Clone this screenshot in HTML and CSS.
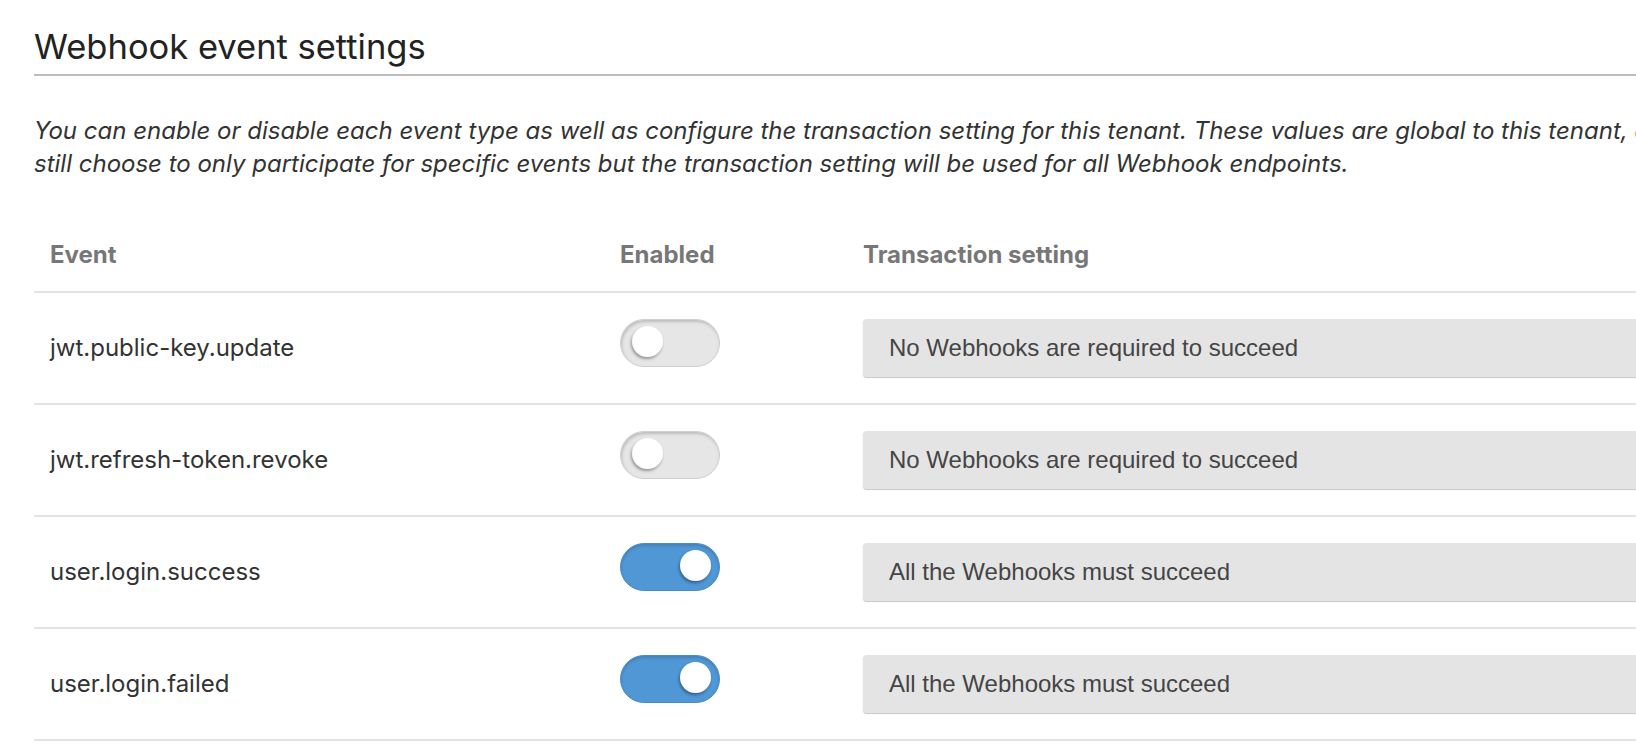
FILE: index.html
```html
<!DOCTYPE html>
<html lang="en">
<head>
<meta charset="utf-8">
<title>Webhook event settings</title>
<link rel="stylesheet" href="styles.css">
</head>
<body>
<div class="page">
  <h2 class="title">Webhook event settings</h2>
  <p class="intro">You can enable or disable each event type as well as configure the transaction setting for this tenant. These values are global to this tenant, and each Webhook can still choose to only participate for specific events but the transaction setting will be used for all Webhook endpoints.</p>
  <div class="table">
    <div class="row head">
      <div class="cell c-event">Event</div>
      <div class="cell c-enabled">Enabled</div>
      <div class="cell c-tx">Transaction setting</div>
    </div>
    <div class="row">
      <div class="cell c-event"><span class="event-name">jwt.public-key.update</span></div>
      <div class="cell c-enabled"><span class="toggle"><span class="knob"></span></span></div>
      <div class="cell c-tx"><div class="select">No Webhooks are required to succeed</div></div>
    </div>
    <div class="row">
      <div class="cell c-event"><span class="event-name">jwt.refresh-token.revoke</span></div>
      <div class="cell c-enabled"><span class="toggle"><span class="knob"></span></span></div>
      <div class="cell c-tx"><div class="select">No Webhooks are required to succeed</div></div>
    </div>
    <div class="row">
      <div class="cell c-event"><span class="event-name">user.login.success</span></div>
      <div class="cell c-enabled"><span class="toggle on"><span class="knob"></span></span></div>
      <div class="cell c-tx"><div class="select">All the Webhooks must succeed</div></div>
    </div>
    <div class="row">
      <div class="cell c-event"><span class="event-name">user.login.failed</span></div>
      <div class="cell c-enabled"><span class="toggle on"><span class="knob"></span></span></div>
      <div class="cell c-tx"><div class="select">All the Webhooks must succeed</div></div>
    </div>
  </div>
</div>
</body>
</html>
```
FILE: styles.css
```css
html, body {
  margin: 0;
  padding: 0;
  background: #fff;
  overflow: hidden;
}
body {
  font-family: Inter, "Noto Sans", sans-serif;
  color: #333;
}
.page {
  width: 2000px;
  padding-left: 34px;
}
.title {
  margin: 0;
  padding-top: 27px;
  padding-bottom: 7px;
  font-size: 34.5px;
  line-height: 40px;
  font-weight: 400;
  color: #222;
  border-bottom: 2px solid #bdbdbd;
}
.intro {
  margin: 0;
  padding-top: 38px;
  font-size: 24px;
  line-height: 33px;
  font-style: italic;
  color: #333;
  width: 1895px;
}
.table {
  margin-top: 60px;
}
.row {
  display: flex;
  border-bottom: 2px solid #e3e3e3;
}
.row.head .cell {
  font-weight: 700;
  color: #777;
  font-size: 24px;
  line-height: 30px;
  padding-top: 0;
  padding-bottom: 21px;
}
.cell {
  box-sizing: border-box;
  padding: 26px 16px 26px 16px;
}
.c-event { width: 570px; }
.c-enabled { width: 243px; }
.c-tx { flex: 1; }
.event-name {
  display: block;
  font-size: 24px;
  line-height: 58px;
  color: #333;
}
.toggle {
  display: block;
  position: relative;
  width: 100px;
  height: 48px;
  box-sizing: border-box;
  border-radius: 24px;
  background: #e6e6e6;
  border: 1px solid #cfcfcf;
  box-shadow: inset 1px 2px 3px rgba(0, 0, 0, 0.18);
}
.toggle .knob {
  position: absolute;
  left: 11px;
  top: 6px;
  width: 31px;
  height: 31px;
  border-radius: 50%;
  background: #fff;
  box-shadow: -1px 2px 3px rgba(0, 0, 0, 0.35);
}
.toggle.on {
  background: #5097d5;
  border-color: #4a8cc6;
  box-shadow: inset 0 2px 3px rgba(0, 0, 0, 0.15);
}
.toggle.on .knob {
  left: 59px;
}
.select {
  height: 58px;
  box-sizing: border-box;
  padding-left: 26px;
  background: #e4e4e4;
  border-radius: 4px;
  box-shadow: 0 1px 1px rgba(0, 0, 0, 0.22);
  font-family: "Liberation Sans", Arial, sans-serif;
  font-size: 24px;
  line-height: 58px;
  color: #454545;
  white-space: nowrap;
}
```
